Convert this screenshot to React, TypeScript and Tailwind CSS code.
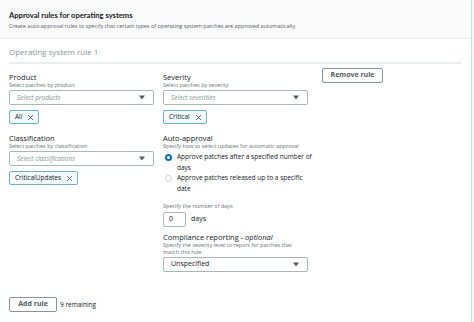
import React from 'react';

function Caret() {
  return (
    <svg width="6" height="5" viewBox="0 0 6 5" className="shrink-0">
      <path d="M0 0.5 L6 0.5 L3 4.5 Z" fill="#545b64" />
    </svg>
  );
}

function Select({ text, placeholder }: { text: string; placeholder?: boolean }) {
  return (
    <div className="flex h-[15px] w-[145px] items-center justify-between rounded-[2px] border border-[#aab7b8] bg-white pl-[7px] pr-[8px]">
      <span className={placeholder ? 'text-[6.5px] italic text-[#879596]' : 'text-[7px] text-[#16191f]'}>{text}</span>
      <Caret />
    </div>
  );
}

function Token({ label }: { label: string }) {
  return (
    <div className="mt-[5px] flex h-[14px] w-fit items-center gap-[5px] rounded-[2px] border border-[#6fb2b9] bg-[#f1faff] pl-[5px] pr-[4px]">
      <span className="text-[6.5px] text-[#16191f]">{label}</span>
      <svg width="7" height="7" viewBox="0 0 7 7">
        <path d="M1 1 L6 6 M6 1 L1 6" stroke="#545b64" strokeWidth="0.9" />
      </svg>
    </div>
  );
}

function Field({ label, hint, children }: { label: React.ReactNode; hint: string; children: React.ReactNode }) {
  return (
    <div className="flex flex-col">
      <div className="text-[7.5px] leading-[9px] text-[#16191f]">{label}</div>
      <div className="mb-[1px] max-w-[136px] text-[5.5px] leading-[7px] text-[#687078]">{hint}</div>
      {children}
    </div>
  );
}

function Radio({ checked, lines }: { checked?: boolean; lines: string[] }) {
  return (
    <div className="flex gap-[5px]">
      <div
        className={
          checked
            ? 'mt-[2px] flex h-[7px] w-[7px] shrink-0 items-center justify-center rounded-full bg-[#0073bb]'
            : 'mt-[2px] h-[7px] w-[7px] shrink-0 rounded-full border border-[#c9ced3] bg-white'
        }
      >
        {checked && <div className="h-[3px] w-[3px] rounded-full bg-white" />}
      </div>
      <div className="whitespace-nowrap text-[6.5px] leading-[10.5px] text-[#16191f]">
        {lines.map((l) => (
          <div key={l}>{l}</div>
        ))}
      </div>
    </div>
  );
}

export default function App() {
  return (
    <div className="flex h-[322px] w-[474px] bg-[#f7f7f7] font-['Open_Sans',sans-serif]">
      <div className="flex w-[472px] flex-col border-r border-[#d5dbdb] bg-white">
        <div className="h-[39px] border-b border-[#eaeded] bg-[#fafafa] px-[9px] pt-[10px]">
          <div className="font-['Lato',sans-serif] text-[7.6px] font-bold leading-[11px] text-[#16191f]">
            Approval rules for operating systems
          </div>
          <div className="mt-[1px] text-[5.5px] leading-[8px] text-[#545b64]">
            Create auto-approval rules to specify that certain types of operating system patches are approved automatically.
          </div>
        </div>

        <div className="flex flex-1 flex-col pl-[9px] pr-[10px]">
          <div className="mt-[7px] border-b-2 border-[#eaeded] pb-[4px] text-[8px] leading-[12px] text-[#879596]">
            Operating system rule 1
          </div>

          <div className="mt-[9px] flex">
            <div className="flex w-[154px] flex-col gap-[10px]">
              <Field label="Product" hint="Select patches by product">
                <Select text="Select products" placeholder />
                <Token label="All" />
              </Field>
              <Field label="Classification" hint="Select patches by classification">
                <Select text="Select classifications" placeholder />
                <Token label="CriticalUpdates" />
              </Field>
            </div>

            <div className="flex w-[159px] flex-col">
              <Field label="Severity" hint="Select patches by severity">
                <Select text="Select severities" placeholder />
                <Token label="Critical" />
              </Field>
              <div className="mt-[10px]">
                <Field label="Auto-approval" hint="Specify how to select updates for automatic approval">
                  <div className="mt-[1px] flex flex-col pl-[2px]">
                    <Radio checked lines={['Approve patches after a specified number of', 'days']} />
                    <Radio lines={['Approve patches released up to a specific', 'date']} />
                  </div>
                  <div className="mt-[9px] text-[5.5px] leading-[7px] text-[#687078]">Specify the number of days</div>
                  <div className="mt-[2px] flex items-center gap-[5px]">
                    <div className="flex h-[15px] w-[23px] items-center rounded-[2px] border border-[#aab7b8] pl-[5px] text-[7px] text-[#16191f]">
                      0
                    </div>
                    <span className="text-[7px] text-[#16191f]">days</span>
                  </div>
                </Field>
              </div>
              <div className="mt-[6px]">
                <Field
                  label={
                    <span>
                      Compliance reporting - <i>optional</i>
                    </span>
                  }
                  hint="Specify the severity level to report for patches that match this rule."
                >
                  <Select text="Unspecified" />
                </Field>
              </div>
            </div>

            <div className="-mt-[5px]">
              <button className="block h-[15px] w-[61px] rounded-[2px] border border-[#879596] bg-white text-[7px] font-bold text-[#545b64]">
                Remove rule
              </button>
            </div>
          </div>

          <div className="mt-auto mb-[10px] flex items-center gap-[3px]">
            <button className="h-[15px] w-[48px] rounded-[2px] border border-[#879596] bg-white text-[7px] font-bold text-[#545b64]">
              Add rule
            </button>
            <span className="text-[6.5px] text-[#16191f]">9 remaining</span>
          </div>
        </div>
      </div>
    </div>
  );
}
